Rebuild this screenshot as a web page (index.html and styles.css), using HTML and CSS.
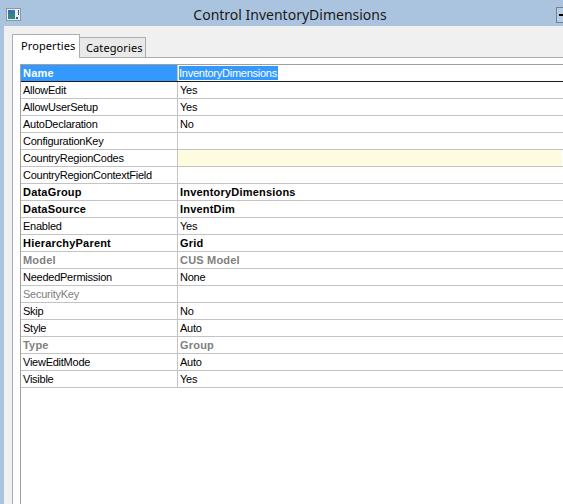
FILE: index.html
```html
<!DOCTYPE html>
<html>
<head>
<meta charset="utf-8">
<link rel="stylesheet" href="styles.css">
</head>
<body>
<div class="window">
  <div class="titlebar">
    <svg class="appicon" width="15" height="13" viewBox="0 0 15 13">
      <rect x="0.5" y="0.5" width="14" height="12" fill="#e8eef4" stroke="#8a97a6"/>
      <rect x="2" y="2" width="7" height="9" fill="#2f8a7a"/>
      <rect x="2" y="2" width="7" height="4" fill="#3a6fa8"/>
      <rect x="10" y="9" width="2" height="2" fill="#4a5a6a"/>
      <rect x="12" y="2" width="1" height="5" fill="#4a5a6a"/>
    </svg>
    <div class="title">Control InventoryDimensions</div>
    <div class="winbtn"><span class="dash"></span></div>
  </div>
  <div class="frame">
    <div class="tabs">
      <div class="tab active">Properties</div>
      <div class="tab">Categories</div>
    </div>
    <div class="panel">
      <div class="grid">
        <div class="row sel"><div class="k b">Name</div><div class="v"><span class="hl">InventoryDimensions</span></div></div>
        <div class="row"><div class="k">AllowEdit</div><div class="v">Yes</div></div>
        <div class="row"><div class="k">AllowUserSetup</div><div class="v">Yes</div></div>
        <div class="row"><div class="k">AutoDeclaration</div><div class="v">No</div></div>
        <div class="row"><div class="k">ConfigurationKey</div><div class="v"></div></div>
        <div class="row"><div class="k">CountryRegionCodes</div><div class="v yellow"></div></div>
        <div class="row"><div class="k">CountryRegionContextField</div><div class="v"></div></div>
        <div class="row"><div class="k b">DataGroup</div><div class="v b">InventoryDimensions</div></div>
        <div class="row"><div class="k b">DataSource</div><div class="v b">InventDim</div></div>
        <div class="row"><div class="k">Enabled</div><div class="v">Yes</div></div>
        <div class="row"><div class="k b">HierarchyParent</div><div class="v b">Grid</div></div>
        <div class="row"><div class="k b g">Model</div><div class="v b g">CUS Model</div></div>
        <div class="row"><div class="k">NeededPermission</div><div class="v">None</div></div>
        <div class="row"><div class="k g">SecurityKey</div><div class="v"></div></div>
        <div class="row"><div class="k">Skip</div><div class="v">No</div></div>
        <div class="row"><div class="k">Style</div><div class="v">Auto</div></div>
        <div class="row"><div class="k b g">Type</div><div class="v b g">Group</div></div>
        <div class="row"><div class="k">ViewEditMode</div><div class="v">Auto</div></div>
        <div class="row"><div class="k">Visible</div><div class="v">Yes</div></div>
      </div>
    </div>
  </div>
</div>
</body>
</html>
```
FILE: styles.css
```css
html, body {
  margin: 0;
  padding: 0;
  overflow: hidden;
}
body {
  width: 563px;
  height: 504px;
  background: #f0f0f0;
}
.window {
  display: flex;
  flex-direction: column;
  height: 504px;
  width: 563px;
  overflow: hidden;
}
.titlebar {
  position: relative;
  height: 26px;
  flex: none;
  background: #aac4df;
  display: flex;
  align-items: center;
}
.appicon {
  position: absolute;
  left: 6px;
  top: 8px;
}
.title {
  flex: 1;
  padding-left: 17px;
  text-align: center;
  font-family: "Noto Sans", "Open Sans", sans-serif;
  font-size: 14px;
  color: #1a1a1a;
  padding-top: 3px;
}
.winbtn {
  position: absolute;
  left: 556px;
  top: 7px;
  width: 14px;
  height: 14px;
  border: 1px solid #6f829c;
  background: #b8cce2;
}
.dash {
  position: absolute;
  left: 2px;
  top: 6px;
  width: 8px;
  height: 2px;
  background: #000;
}
.frame {
  flex: 1;
  display: flex;
  flex-direction: column;
  border-left: 4px solid #aac4df;
  padding: 8px 0 0 8px;
  min-height: 0;
}
.tabs {
  display: flex;
  align-items: flex-end;
  height: 23px;
  flex: none;
  font-family: "Noto Sans", "Open Sans", sans-serif;
  font-size: 11px;
  letter-spacing: 0.1px;
  color: #000;
  position: relative;
  z-index: 1;
}
.tab {
  box-sizing: border-box;
  height: 20px;
  border: 1px solid #adadad;
  border-bottom: none;
  background: #e9e9e9;
  padding: 1px 0 0 6px;
  line-height: 17px;
  width: 66px;
  margin-bottom: 0;
}
.tab.active {
  height: 24px;
  width: 68px;
  background: #fff;
  padding: 2px 0 0 8px;
  border-right: 1px solid #adadad;
  margin-bottom: -1px;
}
.tab + .tab {
  border-left: none;
}
.panel {
  flex: 1;
  background: #fff;
  border-top: 1px solid #adadad;
  border-left: 1px solid #adadad;
  padding: 6px 0 0 7px;
  min-height: 0;
}
.grid {
  height: 100%;
  border-top: 1px solid #a0a0a0;
  border-left: 1px solid #a0a0a0;
  font-family: "Liberation Sans", Arial, sans-serif;
  font-size: 11px;
  letter-spacing: -0.25px;
  color: #000;
}
.row {
  display: flex;
  height: 17px;
  box-sizing: border-box;
  border-bottom: 1px solid #c3c3c3;
  line-height: 16px;
}
.row.sel {
  border-bottom: 1px solid #1a1a1a;
}
.k {
  width: 157px;
  flex: none;
  box-sizing: border-box;
  padding-left: 2px;
  border-right: 1px solid #c3c3c3;
  white-space: nowrap;
}
.v {
  flex: 1;
  padding-left: 2px;
  white-space: nowrap;
}
.row.sel .k {
  background: #3399ff;
  color: #fff;
}
.hl {
  background: #3399ff;
  color: #fff;
  display: inline-block;
  line-height: 14px;
  margin-left: -1px;
  padding-right: 1px;
  margin-top: 1px;
}
.b {
  font-weight: bold;
  font-size: 11px;
  letter-spacing: 0.2px;
}
.g {
  color: #808080;
}
.yellow {
  background: #fffbe1;
  margin-right: 1px;
}
```
